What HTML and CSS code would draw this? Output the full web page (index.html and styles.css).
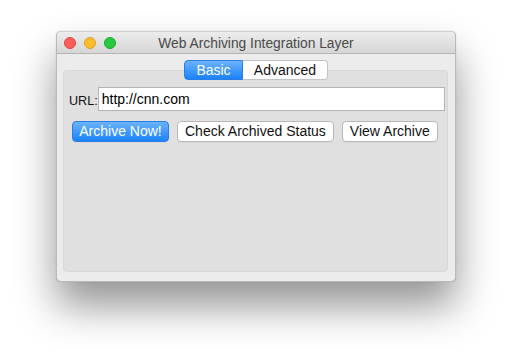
FILE: index.html
```html
<!DOCTYPE html>
<html>
<head>
<meta charset="utf-8">
<link rel="stylesheet" href="styles.css">
</head>
<body>
<div class="window">
  <div class="titlebar">
    <div class="lights">
      <span class="light red"></span>
      <span class="light yellow"></span>
      <span class="light green"></span>
    </div>
    <div class="title">Web Archiving Integration Layer</div>
  </div>
  <div class="content">
    <div class="tabs">
      <span class="tab active">Basic</span>
      <span class="tab">Advanced</span>
    </div>
    <div class="group">
      <div class="url-row">
        <span class="label">URL:</span>
        <div class="field">http://cnn.com</div>
      </div>
      <div class="buttons">
        <span class="btn primary">Archive Now!</span>
        <span class="btn">Check Archived Status</span>
        <span class="btn">View Archive</span>
      </div>
    </div>
  </div>
</div>
</body>
</html>
```

FILE: styles.css
```css
html, body {
  margin: 0;
  padding: 0;
  background: #ffffff;
  width: 512px;
  height: 362px;
  overflow: hidden;
  font-family: "Liberation Sans", Arial, sans-serif;
}
.window {
  margin: 31px 0 0 56px;
  width: 400px;
  height: 251px;
  box-sizing: border-box;
  background: #ececec;
  border: 1px solid #b9b9b9;
  border-top-color: #d0d0d0;
  border-radius: 5px;
  box-shadow: 0 24px 40px rgba(0,0,0,0.42), 0 0 1px rgba(0,0,0,0.3);
  display: flex;
  flex-direction: column;
  overflow: hidden;
}
.titlebar {
  height: 21px;
  flex: none;
  background: linear-gradient(#ececec, #d6d6d6);
  border-bottom: 1px solid #b5b5b5;
  position: relative;
  display: flex;
  align-items: center;
  justify-content: center;
}
.lights {
  position: absolute;
  left: 7px;
  top: 5px;
  display: flex;
  gap: 8px;
}
.light {
  width: 12px;
  height: 12px;
  border-radius: 50%;
  box-sizing: border-box;
}
.red { background: #fc5f57; border: 1px solid #e0443e; }
.yellow { background: #fdbc2e; border: 1px solid #dea123; }
.green { background: #28c840; border: 1px solid #1aab29; }
.title {
  font-size: 13.8px;
  color: #4a4a4a;
  padding-top: 1px;
}
.content {
  flex: 1;
  position: relative;
  padding: 16px 7px 9px 6px;
  display: flex;
  flex-direction: column;
}
.tabs {
  position: absolute;
  top: 6px;
  left: 127px;
  display: flex;
  z-index: 1;
}
.tab {
  height: 20px;
  box-sizing: border-box;
  font-size: 14px;
  line-height: 18px;
  background: #ffffff;
  border: 1px solid #c3c3c3;
  border-left: none;
  border-radius: 0 4px 4px 0;
  padding: 0;
  color: #111;
  width: 85px;
  text-align: center;
}
.tab.active {
  background: linear-gradient(#6cb3fa, #1a82fb);
  border: 1px solid #2a7ce8;
  border-radius: 4px 0 0 4px;
  color: #fff;
  width: 59px;
  padding: 0;
}
.group {
  flex: 1;
  background: #e0e0e0;
  border: 1px solid #d8d8d8;
  border-radius: 4px;
  padding: 16px 2px 0 4px;
}
.url-row {
  display: flex;
  align-items: center;
}
.label {
  flex: none;
  font-size: 12.6px;
  color: #111;
  padding-top: 3px;
  padding-left: 1px;
  white-space: nowrap;
}
.field {
  flex: 1;
  height: 24px;
  box-sizing: border-box;
  background: #fff;
  border: 1px solid #b4b4b4;
  font-size: 14px;
  line-height: 22px;
  padding-left: 3px;
  color: #000;
}
.buttons {
  display: flex;
  margin-top: 10px;
  padding-left: 4px;
  gap: 8px;
}
.btn {
  height: 21px;
  box-sizing: border-box;
  background: #fff;
  border: 1px solid #b9b9b9;
  border-radius: 4px;
  font-size: 14px;
  line-height: 19px;
  color: #111;
  padding: 0 7px;
  white-space: nowrap;
  box-shadow: 0 1px 0 rgba(0,0,0,0.04);
}
.btn.primary {
  background: linear-gradient(#6cb3fa, #1a82fb);
  border-color: #2a7ce8;
  color: #fff;
  width: 97px;
  text-align: center;
  padding: 0;
}
```
